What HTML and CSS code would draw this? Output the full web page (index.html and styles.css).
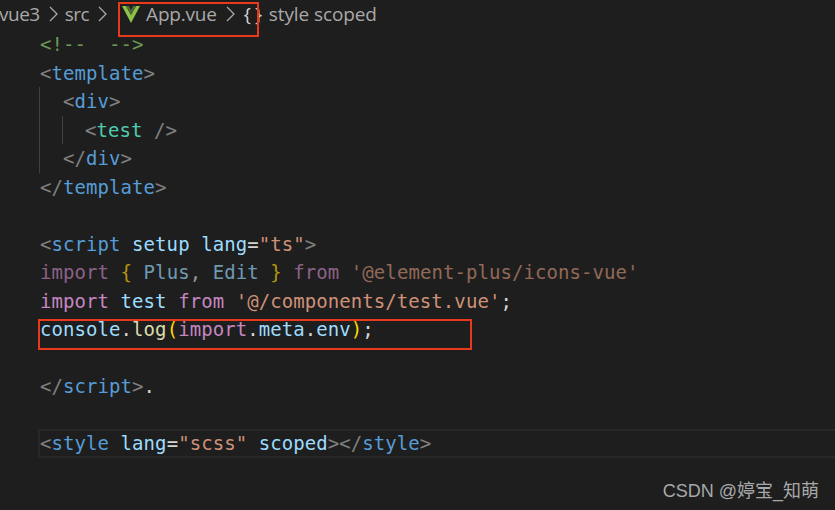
FILE: index.html
```html
<!DOCTYPE html>
<html lang="en">
<head>
  <meta charset="UTF-8">
  <title>App.vue</title>
  <link rel="stylesheet" href="styles.css">
</head>
<body>
  <nav class="crumbs">
    <span>vue3</span>
    <svg class="chev" viewBox="0 0 9 16"><path d="M1 1l7 7-7 7"/></svg>
    <span>src</span>
    <svg class="chev chev-src" viewBox="0 0 9 16"><path d="M1 1l7 7-7 7"/></svg>
    <svg class="vue" viewBox="0 0 18 17"><path class="vue-outer" d="M0 0h4l5 9 5-9h4L9 17z"/><path class="vue-inner" d="M4 0h3l2 4 2-4h3L9 9z"/></svg>
    <span class="file">App.vue</span>
    <svg class="chev" viewBox="0 0 9 16"><path d="M1 1l7 7-7 7"/></svg>
    <span class="braces">{}</span>
    <span class="symbol">style scoped</span>
  </nav>

  <div class="code">
    <div class="line"><span class="com">&lt;!--  --&gt;</span></div>
    <div class="line"><span class="pun">&lt;</span><span class="tag">template</span><span class="pun">&gt;</span></div>
    <div class="guide">
      <div class="line"><span class="pun">&lt;</span><span class="tag">div</span><span class="pun">&gt;</span></div>
      <div class="guide">
        <div class="line"><span class="pun">&lt;</span><span class="cmp">test</span> <span class="pun">/&gt;</span></div>
      </div>
      <div class="line"><span class="pun">&lt;/</span><span class="tag">div</span><span class="pun">&gt;</span></div>
    </div>
    <div class="line"><span class="pun">&lt;/</span><span class="tag">template</span><span class="pun">&gt;</span></div>
    <div class="line"></div>
    <div class="line"><span class="pun">&lt;</span><span class="tag">script</span> <span class="atr">setup</span> <span class="atr">lang</span><span class="txt">=</span><span class="str">"ts"</span><span class="pun">&gt;</span></div>
    <div class="line dim"><span class="key">import</span> <span class="brk">{</span> <span class="atr">Plus</span><span class="txt">,</span> <span class="atr">Edit</span> <span class="brk">}</span> <span class="key">from</span> <span class="str">'@element-plus/icons-vue'</span></div>
    <div class="line"><span class="key">import</span> <span class="atr">test</span> <span class="key">from</span> <span class="str">'@/components/test.vue'</span><span class="txt">;</span></div>
    <div class="line"><span class="atr">console</span><span class="txt">.</span><span class="fun">log</span><span class="brk">(</span><span class="key">import</span><span class="txt">.</span><span class="atr">meta</span><span class="txt">.</span><span class="atr">env</span><span class="brk">)</span><span class="txt">;</span></div>
    <div class="line"></div>
    <div class="line"><span class="pun">&lt;/</span><span class="tag">script</span><span class="pun">&gt;</span><span class="txt">.</span></div>
    <div class="line"></div>
    <div class="line current"><span class="pun">&lt;</span><span class="tag">style</span> <span class="atr">lang</span><span class="txt">=</span><span class="str">"scss"</span> <span class="atr">scoped</span><span class="pun">&gt;&lt;/</span><span class="tag">style</span><span class="pun">&gt;</span></div>
  </div>

  <!-- red annotation boxes drawn on top of the screenshot -->
  <div class="mark mark-file"></div>
  <div class="mark mark-log"></div>
  <div class="watermark">CSDN @婷宝_知萌</div>
</body>
</html>
```

FILE: styles.css
```css
html, body {
  height: 100%;
}
body {
  margin: 0;
  background: #1e1e1e;
  overflow: hidden;
  position: relative;
}
.crumbs {
  display: flex;
  align-items: center;
  height: 30px;
  padding-bottom: 3px;
  box-sizing: border-box;
  margin-left: -1px;
  font-family: "Open Sans", sans-serif;
  font-size: 19px;
  letter-spacing: -0.5px;
  color: #a9a9a9;
  white-space: nowrap;
}
.chev {
  width: 9px;
  height: 16px;
  margin: 0 7px 0 9px;
  flex: none;
}
.chev path {
  fill: none;
  stroke: #a9a9a9;
  stroke-width: 1.3;
}
.chev-src {
  margin-right: 15px;
}
.vue {
  width: 18px;
  height: 17px;
  margin: 1px 6px 0 0;
  flex: none;
}
.vue-outer {
  fill: #8dc149;
}
.vue-inner {
  fill: #4f6b33;
}
.file {
  letter-spacing: -0.2px;
}
.braces {
  width: 15px;
  margin: 0 10px 0 2px;
  color: #d4d4d4;
  letter-spacing: 4px;
}
.symbol {
  letter-spacing: -0.1px;
}
.code {
  padding-left: 40px;
  font-family: "DejaVu Sans Mono", monospace;
  font-size: 19px;
  letter-spacing: 0.07px;
  line-height: 28.5px;
  color: #d4d4d4;
}
.line {
  height: 28.5px;
  white-space: pre;
}
.guide {
  margin-left: -1px;
  padding-left: 23px;
  border-left: 1px solid #404040;
}
.guide .guide {
  padding-left: 22px;
}
.current {
  box-sizing: border-box;
  margin-left: -2px;
  border: 2px solid #282828;
  border-right: 0;
  line-height: 24.5px;
}
.dim {
  opacity: 0.65;
}
.pun { color: #808080; }
.tag { color: #569cd6; }
.cmp { color: #4ec9b0; }
.atr { color: #9cdcfe; }
.str { color: #ce9178; }
.com { color: #6a9955; }
.key { color: #c586c0; }
.fun { color: #dcdcaa; }
.brk { color: #ffd700; }
.txt { color: #d4d4d4; }
.mark {
  position: absolute;
  box-sizing: border-box;
  border: 2px solid #e8391d;
}
.mark-file {
  left: 118px;
  top: 2px;
  width: 141px;
  height: 35px;
}
.mark-log {
  left: 38px;
  top: 319px;
  width: 434px;
  height: 31px;
}
.watermark {
  position: absolute;
  right: 16px;
  bottom: 8px;
  font-family: "Liberation Sans", "Noto Sans CJK SC", sans-serif;
  font-size: 18px;
  color: #a8a8a8;
}
```
